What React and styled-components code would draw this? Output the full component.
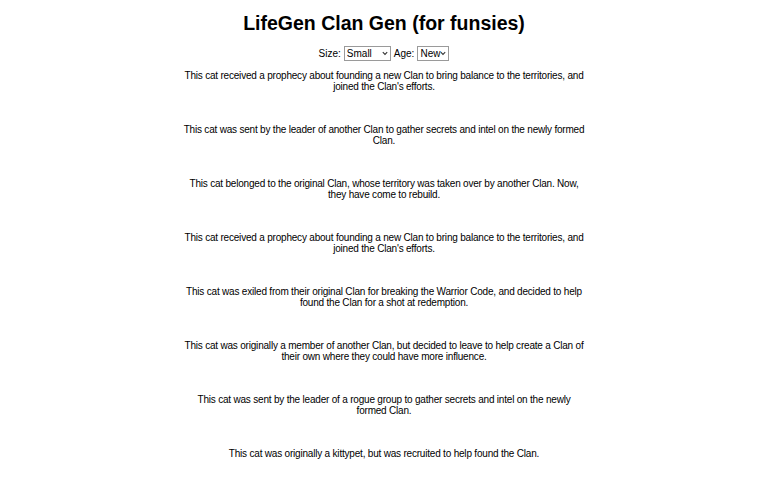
import React from "react";
import styled, { createGlobalStyle } from "styled-components";

const Global = createGlobalStyle`
  html, body { margin: 0; padding: 0; background: #fff; }
  body { font-family: "Liberation Sans", Arial, sans-serif; color: #000; }
`;

const Page = styled.div`
  display: flex;
  flex-direction: column;
  align-items: center;
  padding-top: 12px;
`;

const Title = styled.h1`
  margin: 0;
  font-size: 19.5px;
  font-weight: bold;
  line-height: 23px;
`;

const Controls = styled.div`
  margin-top: 11px;
  display: flex;
  align-items: center;
  gap: 3px;
  font-size: 10px;
  line-height: 15px;
`;

const SelectWrap = styled.span`
  position: relative;
  display: inline-flex;
`;

const Select = styled.select`
  appearance: none;
  -webkit-appearance: none;
  font-family: "Liberation Sans", Arial, sans-serif;
  font-size: 10px;
  color: #000;
  height: 15px;
  width: ${(p) => p.$w}px;
  padding: 0 0 0 2px;
  border: 1px solid #9a9a9a;
  border-radius: 0;
  background: #fff;
  outline: none;
`;

const Chevron = styled.svg`
  position: absolute;
  right: 3px;
  top: 5px;
  width: 6px;
  height: 5px;
  pointer-events: none;
`;

const List = styled.div`
  margin-top: 9px;
  display: flex;
  flex-direction: column;
  width: 404px;
`;

const Item = styled.p`
  margin: 0;
  height: 54px;
  font-size: 10px;
  letter-spacing: -0.2px;
  line-height: 11px;
  text-align: center;
`;

const items = [
  "This cat received a prophecy about founding a new Clan to bring balance to the territories, and joined the Clan's efforts.",
  "This cat was sent by the leader of another Clan to gather secrets and intel on the newly formed Clan.",
  "This cat belonged to the original Clan, whose territory was taken over by another Clan. Now, they have come to rebuild.",
  "This cat received a prophecy about founding a new Clan to bring balance to the territories, and joined the Clan's efforts.",
  "This cat was exiled from their original Clan for breaking the Warrior Code, and decided to help found the Clan for a shot at redemption.",
  "This cat was originally a member of another Clan, but decided to leave to help create a Clan of their own where they could have more influence.",
  "This cat was sent by the leader of a rogue group to gather secrets and intel on the newly formed Clan.",
  "This cat was originally a kittypet, but was recruited to help found the Clan.",
];

function Dropdown({ w, value, options }) {
  return (
    <SelectWrap>
      <Select $w={w} defaultValue={value}>
        {options.map((o) => (
          <option key={o}>{o}</option>
        ))}
      </Select>
      <Chevron viewBox="0 0 6 5">
        <path d="M0.8 1.2 L3 3.4 L5.2 1.2" fill="none" stroke="#333" strokeWidth="1.1" />
      </Chevron>
    </SelectWrap>
  );
}

export default function App() {
  return (
    <>
      <Global />
      <Page>
        <Title>LifeGen Clan Gen (for funsies)</Title>
        <Controls>
          <span>Size:</span>
          <Dropdown w={47} value="Small" options={["Small", "Medium", "Large"]} />
          <span>Age:</span>
          <Dropdown w={32} value="New" options={["New", "Old"]} />
        </Controls>
        <List>
          {items.map((t, i) => (
            <Item key={i}>{t}</Item>
          ))}
        </List>
      </Page>
    </>
  );
}
